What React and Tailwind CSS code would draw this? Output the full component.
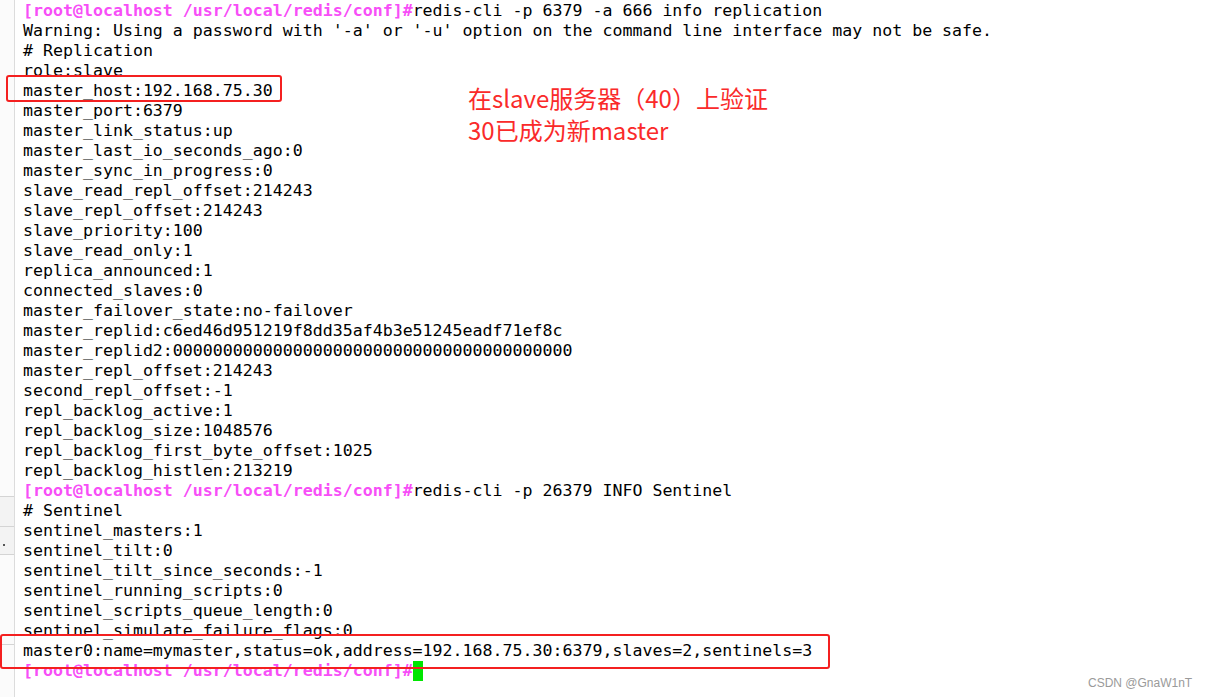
import React from "react";

const P = "[root@localhost /usr/local/redis/conf]#";

const lines = [
  { p: true, t: "redis-cli -p 6379 -a 666 info replication" },
  { t: "Warning: Using a password with '-a' or '-u' option on the command line interface may not be safe." },
  { t: "# Replication" },
  { t: "role:slave" },
  { t: "master_host:192.168.75.30" },
  { t: "master_port:6379" },
  { t: "master_link_status:up" },
  { t: "master_last_io_seconds_ago:0" },
  { t: "master_sync_in_progress:0" },
  { t: "slave_read_repl_offset:214243" },
  { t: "slave_repl_offset:214243" },
  { t: "slave_priority:100" },
  { t: "slave_read_only:1" },
  { t: "replica_announced:1" },
  { t: "connected_slaves:0" },
  { t: "master_failover_state:no-failover" },
  { t: "master_replid:c6ed46d951219f8dd35af4b3e51245eadf71ef8c" },
  { t: "master_replid2:0000000000000000000000000000000000000000" },
  { t: "master_repl_offset:214243" },
  { t: "second_repl_offset:-1" },
  { t: "repl_backlog_active:1" },
  { t: "repl_backlog_size:1048576" },
  { t: "repl_backlog_first_byte_offset:1025" },
  { t: "repl_backlog_histlen:213219" },
  { p: true, t: "redis-cli -p 26379 INFO Sentinel" },
  { t: "# Sentinel" },
  { t: "sentinel_masters:1" },
  { t: "sentinel_tilt:0" },
  { t: "sentinel_tilt_since_seconds:-1" },
  { t: "sentinel_running_scripts:0" },
  { t: "sentinel_scripts_queue_length:0" },
  { t: "sentinel_simulate_failure_flags:0" },
  { t: "master0:name=mymaster,status=ok,address=192.168.75.30:6379,slaves=2,sentinels=3" },
  { p: true, t: "", cursor: true },
];

export default function App() {
  return (
    <div className="relative w-[1207px] h-[697px] bg-white overflow-hidden flex">
      {/* left gutter */}
      <div className="w-[15px] shrink-0 bg-[#fbfbfb] border-r border-[#dcdcdc] flex flex-col">
        <div className="h-[497px] border-b border-[#d4d4d4]" />
        <div className="h-[30px] bg-[#f3f3f3] border-b border-[#d4d4d4]" />
        <div className="h-[28px] bg-[#f3f3f3] border-b border-[#d4d4d4] relative">
          <div className="absolute left-[3px] top-[17px] w-[2px] h-[2px] bg-[#555]" />
        </div>
        <div className="h-[90px] border-b border-[#d4d4d4]" />
      </div>

      {/* terminal text */}
      <div
        className="pl-[8px] pt-[1px] flex flex-col text-[16.6px] leading-[20px] text-black whitespace-pre"
        style={{ fontFamily: '"DejaVu Sans Mono", "Liberation Mono", monospace' }}
      >
        {lines.map((l, i) => (
          <div key={i} className="h-[20px] flex items-center">
            {l.p && <span className="text-[#f74ef7] font-bold">{P}</span>}
            <span>{l.t}</span>
            {l.cursor && <span className="inline-block w-[10px] h-[20px] bg-[#00e600]" />}
          </div>
        ))}
      </div>

      {/* annotation boxes */}
      <div className="absolute left-[6px] top-[75px] w-[276px] h-[27px] border-2 border-[#f42020] rounded-[3px]" />
      <div className="absolute left-0 top-[634px] w-[830px] h-[35px] border-2 border-[#f42020] rounded-[3px]" />

      {/* annotation text */}
      <div
        className="absolute left-[468px] top-[82px] text-[24px] leading-[32px] text-[#fa2a2a]"
        style={{ fontFamily: '"Noto Sans CJK SC", "Noto Sans", sans-serif' }}
      >
        <div>在slave服务器（40）上验证</div>
        <div>30已成为新master</div>
      </div>

      {/* watermark */}
      <div
        className="absolute left-[1088px] top-[674px] text-[12px] leading-[18px] text-[#9a9a9a]"
        style={{ fontFamily: '"Liberation Sans", Arial, sans-serif' }}
      >
        CSDN @GnaW1nT
      </div>
    </div>
  );
}
